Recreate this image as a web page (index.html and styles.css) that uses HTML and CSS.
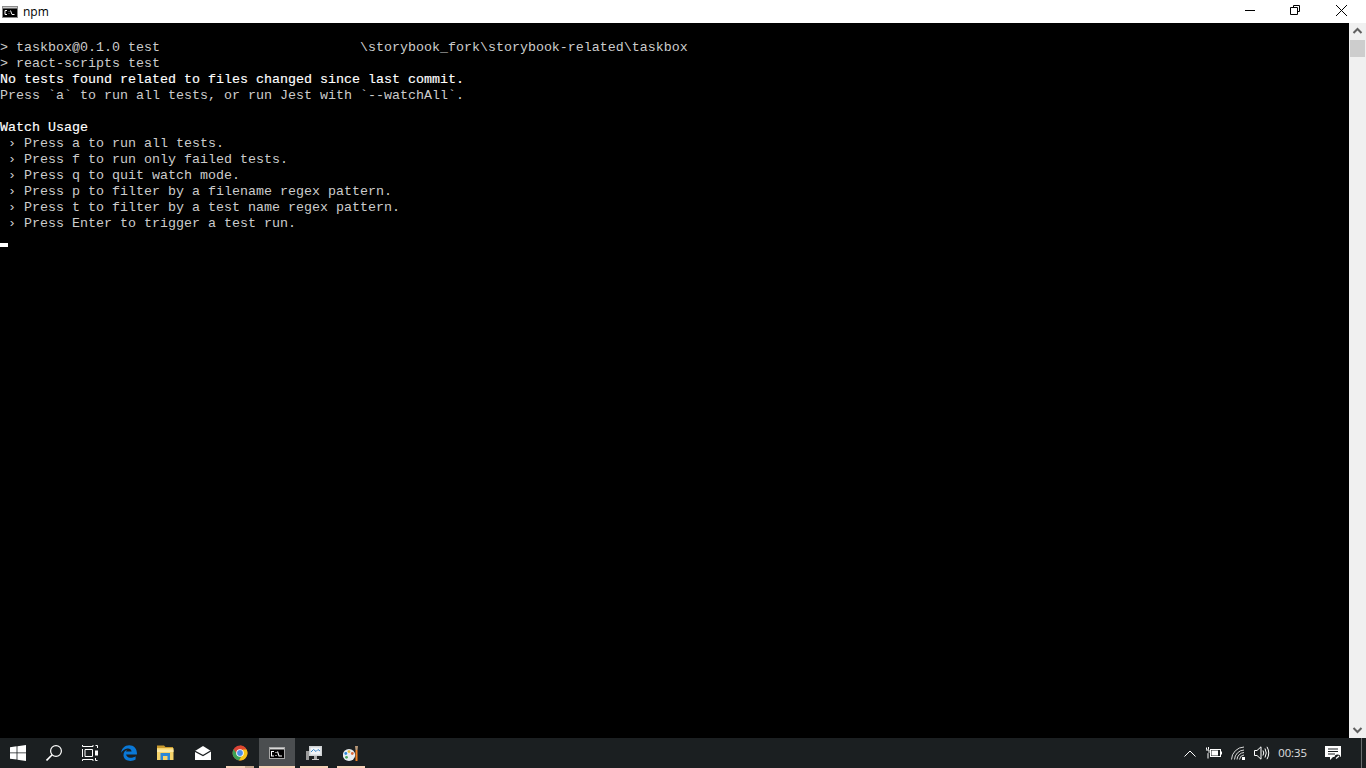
FILE: index.html
```html
<!DOCTYPE html>
<html lang="en">
<head>
<meta charset="utf-8">
<title>npm</title>
<link rel="stylesheet" href="styles.css">
</head>
<body>
<div class="window">
  <header class="titlebar">
    <svg class="app-icon" width="16" height="12" viewBox="0 0 16 12">
      <rect x="0.5" y="0.5" width="15" height="11" fill="#000" stroke="#8a8a8a"/>
      <rect x="1" y="1" width="14" height="1.5" fill="#c8c8c8"/>
      <path d="M5 4.5H3V8.5H5M7 5V5.5M7 7.5V8M8.5 4.5L10 8.5H12.5" fill="none" stroke="#fff" stroke-width="1"/>
    </svg>
    <span class="title">npm</span>
    <div class="controls">
      <button class="ctl"><svg width="12" height="12" viewBox="0 0 12 12"><path d="M2 6.5H12" stroke="#000" stroke-width="1"/></svg></button>
      <button class="ctl"><svg width="12" height="12" viewBox="0 0 12 12"><path d="M1.5 3.5H8.5V10.5H1.5ZM4.5 3.5V1.5H10.5V7.5H8.5" fill="none" stroke="#000" stroke-width="1"/></svg></button>
      <button class="ctl"><svg width="12" height="12" viewBox="0 0 12 12"><path d="M1 1L12 12M12 1L1 12" stroke="#000" stroke-width="1"/></svg></button>
    </div>
  </header>
  <main class="console">
    <div class="screen">
      <div class="row"></div>
      <div class="row">&gt; taskbox@0.1.0 test                         \storybook_fork\storybook-related\taskbox</div>
      <div class="row">&gt; react-scripts test</div>
      <div class="row bright">No tests found related to files changed since last commit.</div>
      <div class="row">Press `a` to run all tests, or run Jest with `--watchAll`.</div>
      <div class="row"></div>
      <div class="row bright">Watch Usage</div>
      <div class="row"> › Press a to run all tests.</div>
      <div class="row"> › Press f to run only failed tests.</div>
      <div class="row"> › Press q to quit watch mode.</div>
      <div class="row"> › Press p to filter by a filename regex pattern.</div>
      <div class="row"> › Press t to filter by a test name regex pattern.</div>
      <div class="row"> › Press Enter to trigger a test run.</div>
      <div class="row cursor-row"><span class="cursor"></span></div>
    </div>
    <aside class="scrollbar">
      <svg width="17" height="17" viewBox="0 0 17 17"><path d="M4.5 10L8.5 6L12.5 10" fill="none" stroke="#606060" stroke-width="2"/></svg>
      <div class="thumb"></div>
      <svg class="arrow-down" width="17" height="17" viewBox="0 0 17 17"><path d="M4.5 7L8.5 11L12.5 7" fill="none" stroke="#606060" stroke-width="2"/></svg>
    </aside>
  </main>
  <footer class="taskbar">
    <div class="tb-btn">
      <svg width="16" height="16" viewBox="0 0 16 16"><path d="M0 2.3L6.6 1.3V7.5H0ZM7.4 1.2L16 0V7.5H7.4ZM0 8.3H6.6V14.6L0 13.7ZM7.4 8.3H16V16L7.4 14.8Z" fill="#fff"/></svg>
    </div>
    <div class="tb-btn">
      <svg width="16" height="16" viewBox="0 0 16 16"><circle cx="10" cy="6" r="5.4" fill="none" stroke="#fff" stroke-width="1.2"/><path d="M6.2 9.8L0.5 15.5" stroke="#fff" stroke-width="1.6"/></svg>
    </div>
    <div class="tb-btn">
      <svg width="16" height="16" viewBox="0 0 16 16"><path d="M0.5 0V1.5H11V0M3 4.5H10.5V11.5H3ZM0.5 16V14.5H11V16M0.5 4V12M13.5 0.5H15.5V3M13.5 13V15.5H15.5" fill="none" stroke="#fff" stroke-width="1"/><rect x="13" y="5.5" width="3" height="5" fill="#fff"/></svg>
    </div>
    <div class="tb-btn tb-app">
      <svg width="16" height="16" viewBox="0 0 16 16"><path d="M8.2 0.2C3.7 0.2 0.6 3.4 0.2 7.8C1.4 5.4 3.7 3.9 6.4 3.5C8.5 3.2 10.3 4.4 10.6 6.6H5C5.6 4.9 7 4.6 7 4.6C3.8 5.4 2.2 8 2.5 10.8C2.9 14.2 6.1 16 9.5 16C11.5 16 13.4 15.4 14.6 14.6V11.3C12.8 12.5 10.8 13 9 12.7C7 12.4 5.5 11.4 5.1 9.4H15.9C16.4 4 13.2 0.2 8.2 0.2Z" fill="#0a78d7"/></svg>
    </div>
    <div class="tb-btn tb-app">
      <svg width="18" height="16" viewBox="0 0 18 16"><path d="M0 0.5H7L8.5 2H16V4H0Z" fill="#c99a2e"/><path d="M0 3H16.5V15H0Z" fill="#f6d36b"/><path d="M0 4.5H16.5V7H0Z" fill="#fce8a4"/><path d="M3.5 8H13V15H10.5V11H6V15H3.5Z" fill="#2a86d8"/></svg>
    </div>
    <div class="tb-btn tb-app">
      <svg width="16" height="14" viewBox="0 0 16 14"><path d="M0 5L8 0L16 5V14H0Z" fill="#fff"/><path d="M0 5.2L8 9.5L16 4.8" fill="none" stroke="#1b1f21" stroke-width="1.2"/></svg>
    </div>
    <div class="tb-btn tb-app tb-open tb-split">
      <svg width="16" height="16" viewBox="0 0 16 16"><circle cx="8" cy="8" r="7.5" fill="#db4437"/><path d="M8 0.5A7.5 7.5 0 0 1 14.6 4.5H8Z" fill="#e0492e"/><path d="M1.5 4.2A7.5 7.5 0 0 0 7 15.4L10.5 9.5H5.5Z" fill="#3ba155"/><path d="M14.6 4.5A7.5 7.5 0 0 1 7 15.4L10.5 9.5L10.8 4.5Z" fill="#f5c518"/><circle cx="8" cy="8" r="3.8" fill="#fff"/><circle cx="8" cy="8" r="2.9" fill="#4a8ee8"/></svg>
    </div>
    <div class="tb-btn tb-app tb-active">
      <svg width="16" height="12" viewBox="0 0 16 12"><rect x="0.5" y="0.5" width="15" height="11" fill="#000" stroke="#a8a8a8"/><rect x="1" y="1" width="14" height="1.5" fill="#d8d8d8"/><path d="M5 4.5H2.5V9H5M7 5V6M7 8V9M8.5 4.5L10 9H13" fill="none" stroke="#fff" stroke-width="1.1"/></svg>
    </div>
    <div class="tb-btn tb-app tb-open">
      <svg width="16" height="16" viewBox="0 0 16 16"><rect x="0" y="6" width="3" height="9" fill="#9b9b9b"/><rect x="3" y="1" width="13" height="10" fill="#cfd2d4"/><rect x="4.5" y="2.5" width="10" height="7" fill="#f0f4f8"/><path d="M5 7L7.5 4.5L10 6.5L12 4.5L14 6" fill="none" stroke="#3a87c8" stroke-width="1"/><rect x="8" y="11" width="3" height="3" fill="#aaa"/><rect x="6" y="14" width="7" height="1" fill="#ccc"/></svg>
    </div>
    <div class="tb-btn tb-app tb-open">
      <svg width="16" height="17" viewBox="0 0 16 17"><ellipse cx="6" cy="10" rx="6.2" ry="6" fill="#e6ecf0"/><circle cx="2.8" cy="8.5" r="1.4" fill="#2a86d8"/><circle cx="6" cy="6.6" r="1.4" fill="#e8b83a"/><circle cx="9.3" cy="8.5" r="1.4" fill="#d8683a"/><circle cx="3.5" cy="12.3" r="1.4" fill="#4aa85a"/><path d="M13.5 5V16" stroke="#f08020" stroke-width="2"/><path d="M12 1L15 1L14.5 5H12.5Z" fill="#b89878"/></svg>
    </div>
    <div class="tray">
      <svg class="tray-chevron" width="12" height="7" viewBox="0 0 12 7"><path d="M0.5 6.5L6 1L11.5 6.5" fill="none" stroke="#fff" stroke-width="1"/></svg>
      <svg class="tray-battery" width="16" height="12" viewBox="0 0 16 12"><path d="M2.5 0V2.5M0.5 0.5V2.5M0 3H3V5.5L2 6.5V11.5" fill="none" stroke="#fff" stroke-width="1"/><rect x="4.5" y="2.5" width="10" height="7" fill="none" stroke="#fff"/><rect x="5.5" y="3.5" width="6.5" height="5" fill="#fff"/><rect x="15" y="4.5" width="1" height="3" fill="#fff"/></svg>
      <svg class="tray-wifi" width="14" height="14" viewBox="0 0 14 14"><path d="M0.5 13.5A13 13 0 0 1 13 1M3.5 13.5A10 10 0 0 1 13 4M6 13.5A7.5 7.5 0 0 1 13 6.5M8.5 13.5A5 5 0 0 1 13 9" fill="none" stroke="#d8d8d8" stroke-width="1"/><rect x="11" y="11" width="3" height="3" fill="#fff"/></svg>
      <svg class="tray-volume" width="16" height="14" viewBox="0 0 16 14"><path d="M0.5 4.5H3L7 0.8V13.2L3 9.5H0.5Z" fill="none" stroke="#fff" stroke-width="1"/><path d="M9 4.5Q10.5 7 9 9.5M11 2.5Q13.5 7 11 11.5M13 0.8Q16.5 7 13 13.2" fill="none" stroke="#fff" stroke-width="1"/></svg>
      <span class="clock">00:35</span>
      <svg class="tray-notify" width="16" height="15" viewBox="0 0 16 15"><path d="M0 0H16V11H8L5 14V11H0Z" fill="#fff"/><path d="M3 3H13M3 5.5H13M3 8H10" stroke="#1b1f21" stroke-width="1"/><circle cx="12.5" cy="11.5" r="3" fill="#1b1f21"/><path d="M11 12.5L14 10" stroke="#fff" stroke-width="1.2"/></svg>
      <span class="show-desktop"></span>
    </div>
  </footer>
</div>
</body>
</html>
```
FILE: styles.css
```css
* { box-sizing: border-box; }
html, body { margin: 0; padding: 0; height: 100%; overflow: hidden; }
.window { display: flex; flex-direction: column; width: 1366px; height: 768px; background: #000; }

.titlebar { display: flex; align-items: center; height: 23px; background: #fff; padding-left: 2px; flex: none; }
.app-icon { flex: none; }
.title { margin-left: 5px; font: 12px/23px "Open Sans", sans-serif; color: #000; }
.controls { display: flex; margin-left: auto; height: 23px; padding-right: 2px; }
.ctl { display: flex; align-items: center; justify-content: center; width: 46px; height: 23px; padding: 0 0 3px; border: 0; background: #fff; }

.console { display: flex; flex: 1; min-height: 0; }
.screen { flex: 1; font: 13.333px/18px "Liberation Mono", monospace; color: #ccc; }
.row { height: 16px; white-space: pre; }
.bright { color: #fff; -webkit-text-stroke: 0.15px #fff; }
.cursor-row { display: flex; align-items: flex-end; }
.cursor { width: 8px; height: 4px; background: #fff; }

.scrollbar { display: flex; flex-direction: column; width: 17px; background: #f0f0f0; }
.thumb { height: 17px; margin-left: 1px; width: 15px; background: #cdcdcd; }
.arrow-down { margin-top: auto; }

.taskbar { display: flex; align-items: stretch; height: 30px; flex: none; background: #1b1f21; }
.tb-btn { position: relative; display: flex; align-items: center; justify-content: center; width: 36px; flex: none; }
.tb-app { margin-left: 1px; }
.tb-btn:nth-child(4) { margin-left: 3px; }
.tb-open::after, .tb-active::after { content: ""; position: absolute; left: 4px; right: 4px; bottom: 0; height: 2px; background: #f7d2b8; }
.tb-split::after { background: linear-gradient(to right, #f7d2b8 68%, #c9a98f 68%); }
.tb-active { background: #4b4e50; }
.tb-active::after { left: 0; right: 0; }

.tray { display: flex; align-items: center; margin-left: auto; height: 30px; }
.tray-chevron { margin-right: 10px; }
.tray-battery { margin-right: 9px; }
.tray-wifi { margin-right: 9px; }
.tray-volume { margin-right: 8px; }
.clock { font: 11.3px/30px "Open Sans", sans-serif; color: #e0e0e0; margin-right: 18px; }
.tray-notify { margin-right: 20px; }
.show-desktop { width: 1px; height: 30px; background: #6a6d6f; margin-right: 4px; }
```
